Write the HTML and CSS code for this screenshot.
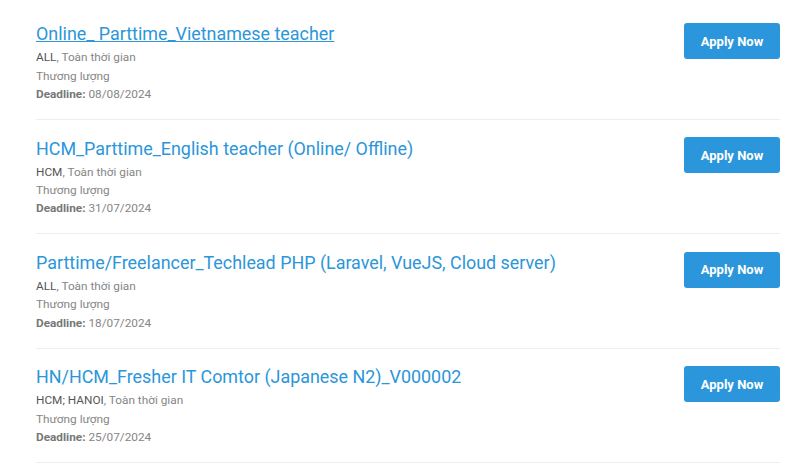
FILE: index.html
```html
<!DOCTYPE html>
<html lang="vi">
<head>
<meta charset="utf-8">
<link rel="stylesheet" href="styles.css">
</head>
<body>
<div class="jobs">
  <div class="job">
    <div class="info">
      <a class="title hover" href="#">Online_ Parttime_Vietnamese teacher</a>
      <div class="meta"><span class="loc">ALL</span>, Toàn thời gian</div>
      <div class="meta">Thương lượng</div>
      <div class="meta"><b>Deadline:</b> 08/08/2024</div>
    </div>
    <a class="apply" href="#">Apply Now</a>
  </div>
  <div class="job">
    <div class="info">
      <a class="title" href="#">HCM_Parttime_English teacher (Online/ Offline)</a>
      <div class="meta"><span class="loc">HCM</span>, Toàn thời gian</div>
      <div class="meta">Thương lượng</div>
      <div class="meta"><b>Deadline:</b> 31/07/2024</div>
    </div>
    <a class="apply" href="#">Apply Now</a>
  </div>
  <div class="job">
    <div class="info">
      <a class="title" href="#">Parttime/Freelancer_Techlead PHP (Laravel, VueJS, Cloud server)</a>
      <div class="meta"><span class="loc">ALL</span>, Toàn thời gian</div>
      <div class="meta">Thương lượng</div>
      <div class="meta"><b>Deadline:</b> 18/07/2024</div>
    </div>
    <a class="apply" href="#">Apply Now</a>
  </div>
  <div class="job">
    <div class="info">
      <a class="title" href="#">HN/HCM_Fresher IT Comtor (Japanese N2)_V000002</a>
      <div class="meta"><span class="loc">HCM; HANOI</span>, Toàn thời gian</div>
      <div class="meta">Thương lượng</div>
      <div class="meta"><b>Deadline:</b> 25/07/2024</div>
    </div>
    <a class="apply" href="#">Apply Now</a>
  </div>
</div>
</body>
</html>
```
FILE: styles.css
```css
html, body {
  margin: 0;
  padding: 0;
  background: #fff;
}
body {
  font-family: Roboto, "Liberation Sans", sans-serif;
}
.jobs {
  padding: 5.6px 20px 0 36px;
  width: 744px;
}
.job {
  display: flex;
  justify-content: space-between;
  align-items: flex-start;
  padding: 17.5px 0 0;
  height: 95.83px;
  border-bottom: 1px solid #eeeeee;
}
.info {
  display: flex;
  flex-direction: column;
  padding-top: 0.3px;
}
.title {
  font-size: 17.9px;
  line-height: 22px;
  color: #2b96d9;
  text-decoration: none;
  margin-bottom: 3px;
}
.title.hover {
  text-decoration: underline;
}
.meta {
  font-size: 11.8px;
  line-height: 18.3px;
  color: #868686;
}
.meta .loc {
  color: #555555;
}
.meta b {
  color: #777777;
  font-weight: 700;
}
.apply {
  display: flex;
  align-items: center;
  justify-content: center;
  width: 96px;
  height: 36px;
  box-sizing: border-box;
  background: #2b96dc;
  color: #fff;
  font-size: 13px;
  font-weight: 700;
  text-decoration: none;
  border-radius: 3px;
}
```
